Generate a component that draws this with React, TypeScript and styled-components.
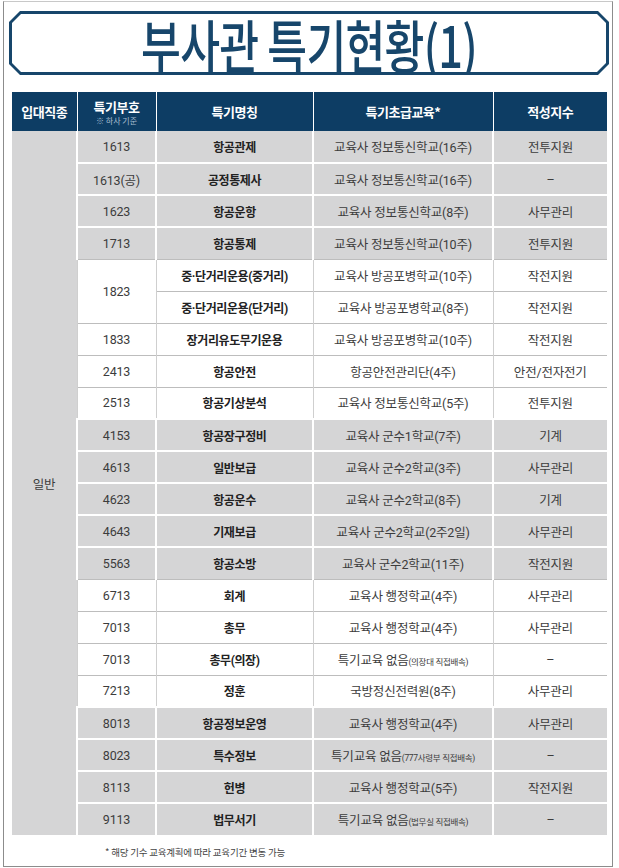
import React from 'react'
import styled, { createGlobalStyle } from 'styled-components'

const GlobalStyle = createGlobalStyle`
  body {
    margin: 0;
    background: #ffffff;
    font-family: Roboto, "Noto Sans CJK KR", "Noto Sans", sans-serif;
    color: #3a3a3a;
  }
`

type Shade = 'g' | 'w'

interface Row {
  code?: string
  codeSpan?: number
  name: string
  edu: string
  eduNote?: string
  score: string
  shade: Shade
}

const rows: Row[] = [
  { code: '1613', name: '항공관제', edu: '교육사 정보통신학교(16주)', score: '전투지원', shade: 'g' },
  { code: '1613(공)', name: '공정통제사', edu: '교육사 정보통신학교(16주)', score: '–', shade: 'g' },
  { code: '1623', name: '항공운항', edu: '교육사 정보통신학교(8주)', score: '사무관리', shade: 'g' },
  { code: '1713', name: '항공통제', edu: '교육사 정보통신학교(10주)', score: '전투지원', shade: 'g' },
  { code: '1823', codeSpan: 2, name: '중·단거리운용(중거리)', edu: '교육사 방공포병학교(10주)', score: '작전지원', shade: 'w' },
  { name: '중·단거리운용(단거리)', edu: '교육사 방공포병학교(8주)', score: '작전지원', shade: 'w' },
  { code: '1833', name: '장거리유도무기운용', edu: '교육사 방공포병학교(10주)', score: '작전지원', shade: 'w' },
  { code: '2413', name: '항공안전', edu: '항공안전관리단(4주)', score: '안전/전자전기', shade: 'w' },
  { code: '2513', name: '항공기상분석', edu: '교육사 정보통신학교(5주)', score: '전투지원', shade: 'w' },
  { code: '4153', name: '항공장구정비', edu: '교육사 군수1학교(7주)', score: '기계', shade: 'g' },
  { code: '4613', name: '일반보급', edu: '교육사 군수2학교(3주)', score: '사무관리', shade: 'g' },
  { code: '4623', name: '항공운수', edu: '교육사 군수2학교(8주)', score: '기계', shade: 'g' },
  { code: '4643', name: '기재보급', edu: '교육사 군수2학교(2주2일)', score: '사무관리', shade: 'g' },
  { code: '5563', name: '항공소방', edu: '교육사 군수2학교(11주)', score: '작전지원', shade: 'g' },
  { code: '6713', name: '회계', edu: '교육사 행정학교(4주)', score: '사무관리', shade: 'w' },
  { code: '7013', name: '총무', edu: '교육사 행정학교(4주)', score: '사무관리', shade: 'w' },
  { code: '7013', name: '총무(의장)', edu: '특기교육 없음', eduNote: '(의장대 직접배속)', score: '–', shade: 'w' },
  { code: '7213', name: '정훈', edu: '국방정신전력원(8주)', score: '사무관리', shade: 'w' },
  { code: '8013', name: '항공정보운영', edu: '교육사 행정학교(4주)', score: '사무관리', shade: 'g' },
  { code: '8023', name: '특수정보', edu: '특기교육 없음', eduNote: '(777사령부 직접배속)', score: '–', shade: 'g' },
  { code: '8113', name: '헌병', edu: '교육사 행정학교(5주)', score: '작전지원', shade: 'g' },
  { code: '9113', name: '법무서기', edu: '특기교육 없음', eduNote: '(법무실 직접배속)', score: '–', shade: 'g' },
]

const Page = styled.div`
  box-sizing: border-box;
  width: 610px;
  height: 866px;
  margin: 1px 0 0 3px;
  border: 1px solid #8c8c8c;
  border-top-color: #c8c8c8;
`

const TitleFrame = styled.div`
  box-sizing: border-box;
  margin: 9px 3px 0 5px;
  height: 64px;
  padding: 3px;
  background: #17466b;
  clip-path: polygon(11px 0, calc(100% - 11px) 0, 100% 11px, 100% calc(100% - 11px), calc(100% - 11px) 100%, 11px 100%, 0 calc(100% - 11px), 0 11px);
`

const TitleInner = styled.div`
  height: 100%;
  display: flex;
  align-items: center;
  justify-content: center;
  background: #ffffff;
  clip-path: polygon(9px 0, calc(100% - 9px) 0, 100% 9px, 100% calc(100% - 9px), calc(100% - 9px) 100%, 9px 100%, 0 calc(100% - 9px), 0 9px);
`

const Title = styled.h1`
  margin: 0;
  font-family: "Noto Sans CJK KR", sans-serif;
  font-size: 57px;
  line-height: 1;
  font-weight: 500;
  color: #17466b;
  letter-spacing: -1px;
  transform: scaleX(0.76);
  white-space: nowrap;
`

const Table = styled.table`
  border-collapse: collapse;
  table-layout: fixed;
  width: 595px;
  margin: 17px 0 0 8px;
`

const HeadCell = styled.th<{ $first?: boolean }>`
  height: 39px;
  padding: 0;
  background: #0d3d64;
  color: #ffffff;
  font-family: "Noto Sans CJK KR", sans-serif;
  font-size: 13px;
  font-weight: 700;
  letter-spacing: -0.5px;
  text-align: center;
  vertical-align: middle;
  border-left: ${p => (p.$first ? 'none' : '1.5px solid #ffffff')};
`

const HeadMain = styled.div`
  line-height: 17px;
`

const HeadSub = styled.div`
  font-size: 8px;
  font-weight: 400;
  line-height: 11px;
  color: #a9bdd1;
  letter-spacing: 0;
`

const BodyRow = styled.tr`
  height: 32px;
`

const Cell = styled.td<{ $shade: Shade; $bold?: boolean; $top?: boolean; $left?: boolean }>`
  padding: 0;
  text-align: center;
  vertical-align: middle;
  white-space: nowrap;
  font-size: ${p => (p.$bold ? '12px' : '12.5px')};
  letter-spacing: ${p => (p.$bold ? '-0.4px' : '-0.2px')};
  font-weight: ${p => (p.$bold ? 700 : 400)};
  color: ${p => (p.$bold ? '#222222' : '#3c3c3c')};
  background: ${p => (p.$shade === 'g' ? '#d5d5d6' : '#ffffff')};
  border-top: ${p =>
    p.$top ? 'none' : p.$shade === 'g' ? '2px solid #ffffff' : '1px solid #bdbdbd'};
  border-left: ${p =>
    p.$left ? 'none' : p.$shade === 'g' ? '2px solid #ffffff' : '1px solid #cfcfcf'};
`

const Note = styled.span`
  font-size: 8.5px;
  letter-spacing: -0.3px;
`

const Footer = styled.p`
  margin: 10px 0 0 101px;
  font-family: "Noto Sans CJK KR", sans-serif;
  font-size: 9.5px;
  line-height: 14px;
  color: #444444;
  letter-spacing: -0.2px;
`

export default function App() {
  return (
    <>
      <GlobalStyle />
      <Page>
        <TitleFrame>
          <TitleInner>
            <Title>부사관 특기현황(1)</Title>
          </TitleInner>
        </TitleFrame>
        <Table>
          <colgroup>
            <col style={{ width: 65 }} />
            <col style={{ width: 79 }} />
            <col style={{ width: 157 }} />
            <col style={{ width: 180 }} />
            <col style={{ width: 114 }} />
          </colgroup>
          <thead>
            <tr>
              <HeadCell $first>입대직종</HeadCell>
              <HeadCell>
                <HeadMain>특기부호</HeadMain>
                <HeadSub>※ 하사 기준</HeadSub>
              </HeadCell>
              <HeadCell>특기명칭</HeadCell>
              <HeadCell>특기초급교육*</HeadCell>
              <HeadCell>적성지수</HeadCell>
            </tr>
          </thead>
          <tbody>
            {rows.map((r, i) => (
              <BodyRow key={i}>
                {i === 0 && (
                  <Cell $shade="g" $top $left rowSpan={rows.length}>
                    일반
                  </Cell>
                )}
                {r.code !== undefined && (
                  <Cell $shade={r.shade} $top={i === 0} rowSpan={r.codeSpan ?? 1}>
                    {r.code}
                  </Cell>
                )}
                <Cell $shade={r.shade} $top={i === 0} $bold>
                  {r.name}
                </Cell>
                <Cell $shade={r.shade} $top={i === 0}>
                  {r.edu}
                  {r.eduNote && <Note>{r.eduNote}</Note>}
                </Cell>
                <Cell $shade={r.shade} $top={i === 0}>
                  {r.score}
                </Cell>
              </BodyRow>
            ))}
          </tbody>
        </Table>
        <Footer>* 해당 기수 교육계획에 따라 교육기간 변동 가능</Footer>
      </Page>
    </>
  )
}
